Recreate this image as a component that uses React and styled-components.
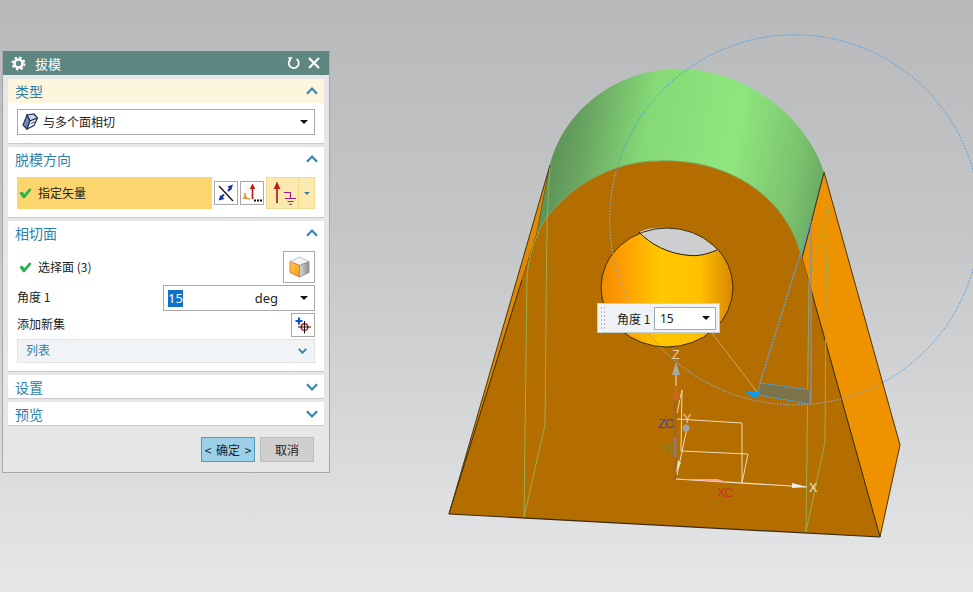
import React from 'react';
import styled, { createGlobalStyle } from 'styled-components';

const GlobalStyle = createGlobalStyle`
  html, body { margin: 0; padding: 0; height: 100%; }
  body { overflow: hidden; font-family: "Noto Sans CJK SC", "Liberation Sans", sans-serif; }
`;

const Viewport = styled.div`
  position: relative;
  width: 973px;
  height: 592px;
  overflow: hidden;
  background: linear-gradient(180deg, #b7b9bb 0%, #c4c6c7 40%, #e6e7e8 100%);
`;

const Scene = styled.svg`
  position: absolute;
  inset: 0;
`;

const Dialog = styled.div`
  position: absolute;
  left: 2px;
  top: 51px;
  width: 326px;
  height: 421px;
  background: #e6e6e6;
  border: 1px solid #a5a8a8;
  border-top: none;
  display: flex;
  flex-direction: column;
`;

const TitleBar = styled.div`
  height: 24px;
  background: #5d8780;
  color: #fff;
  display: flex;
  align-items: center;
  padding: 0 9px 0 8px;
  font-size: 13px;
`;

const TitleText = styled.span`
  flex: 1;
  margin-left: 9px;
`;

const TitleIcons = styled.div`
  display: flex;
  align-items: center;
  gap: 7px;
`;

const Sections = styled.div`
  padding: 4px 5px 0 5px;
  display: flex;
  flex-direction: column;
  gap: 3px;
`;

const Section = styled.div`
  background: #fff;
  border-bottom: 1px solid #c8c8c8;
  display: flex;
  flex-direction: column;
`;

const SectionHead = styled.div`
  height: ${p => p.$h || 24}px;
  display: flex;
  align-items: center;
  justify-content: space-between;
  padding: 0 6px 0 7px;
  color: #2f80aa;
  font-size: 14px;
  background: ${p => (p.$active ? '#fdf5dc' : '#fff')};
`;

const Body = styled.div`
  padding: 6px 9px 8px 9px;
  display: flex;
  flex-direction: column;
  gap: ${p => p.$gap || 0}px;
`;

const Select = styled.div`
  height: 26px;
  box-sizing: border-box;
  border: 1px solid #a8a8a8;
  display: flex;
  align-items: center;
  padding: 0 6px 0 4px;
  gap: 5px;
  font-size: 12px;
  color: #222;
`;

const Grow = styled.span`
  flex: 1;
  padding-bottom: 2px;
`;

// CJK glyphs sit low in their line box, this lifts a label to the row's centre
const Label = styled.span`
  padding-bottom: ${p => p.$lift || 2}px;
`;

const Caret = styled.span`
  width: 0;
  height: 0;
  border-left: 4px solid transparent;
  border-right: 4px solid transparent;
  border-top: 4px solid #111;
`;

const VectorRow = styled.div`
  display: flex;
  align-items: center;
  gap: 2px;
  height: 32px;
`;

const VectorLabel = styled.div`
  width: 195px;
  height: 32px;
  background: #fdd56e;
  display: flex;
  align-items: center;
  padding-left: 2px;
  box-sizing: border-box;
  gap: 6px;
  font-size: 12px;
  color: #222;
`;

const IconButton = styled.div`
  width: ${p => p.$size || 24}px;
  height: ${p => p.$size || 24}px;
  box-sizing: border-box;
  border: 1px solid #a8a8a8;
  background: #fff;
  display: flex;
  align-items: center;
  justify-content: center;
  flex-shrink: 0;
`;

const SplitButton = styled.div`
  width: 49px;
  height: 32px;
  flex-shrink: 0;
  display: flex;
  background: #fbe9ae;
  border: 1px solid #f3d98e;
  box-sizing: border-box;
`;

const SplitMain = styled.div`
  width: 31px;
  display: flex;
  align-items: center;
  justify-content: center;
  border-right: 1px solid #f3d98e;
`;

const SplitDrop = styled.div`
  flex: 1;
  display: flex;
  align-items: center;
  justify-content: center;
`;

const SmallCaret = styled.span`
  width: 0;
  height: 0;
  border-left: 3px solid transparent;
  border-right: 3px solid transparent;
  border-top: 3px solid #3a7f96;
`;

const Row = styled.div`
  display: flex;
  align-items: center;
  justify-content: space-between;
  height: ${p => p.$h}px;
  font-size: 12px;
  color: #222;
`;

const RowLabel = styled.span`
  display: flex;
  align-items: center;
  gap: 6px;
  padding-left: 2px;
`;

const AngleInput = styled.div`
  width: 152px;
  height: 26px;
  box-sizing: border-box;
  border: 1px solid #a8a8a8;
  display: flex;
  align-items: center;
  padding: 0 6px 0 4px;
  font-family: "Noto Sans", sans-serif;
  font-size: 13px;
`;

const Selected = styled.span`
  background: #0f72c4;
  color: #fff;
  line-height: 17px;
  width: 15px;
  text-align: center;
`;

const Unit = styled.span`
  flex: 1;
  text-align: right;
  padding-right: 22px;
`;

const ListHead = styled.div`
  height: 24px;
  box-sizing: border-box;
  background: #f0f4f6;
  border: 1px solid #dfe3e4;
  display: flex;
  align-items: center;
  justify-content: space-between;
  padding: 0 7px 0 8px;
  color: #2f80aa;
  font-size: 12px;
`;

const Footer = styled.div`
  display: flex;
  justify-content: flex-end;
  gap: 5px;
  padding: 11px 15px 0 0;
`;

const Button = styled.div`
  width: 54px;
  height: 25px;
  box-sizing: border-box;
  display: flex;
  align-items: center;
  justify-content: center;
  font-size: 12px;
  word-spacing: 2px;
  color: #222;
  background: ${p => (p.$primary ? '#9ccfe8' : '#cfcfcf')};
  border: 1px solid ${p => (p.$primary ? '#4f9cc0' : '#bdbdbd')};
`;

const FloatBox = styled.div`
  position: absolute;
  left: 597px;
  top: 303px;
  width: 123px;
  height: 30px;
  box-sizing: border-box;
  background: #eff3f5;
  border: 1px solid #c9cccd;
  display: flex;
  align-items: center;
  font-size: 12px;
  color: #222;
  padding: 0 3px 0 2px;
`;

const Grip = styled.span`
  width: 6px;
  height: 24px;
  background-image: radial-gradient(circle, #b4b8bc 1px, transparent 1.1px);
  background-size: 3px 4px;
`;

const FloatLabel = styled.span`
  margin-left: 11px;
  width: 37px;
  white-space: nowrap;
`;

const FloatInput = styled.div`
  width: 62px;
  height: 23px;
  box-sizing: border-box;
  background: #fff;
  border: 1px solid #a8a8a8;
  display: flex;
  align-items: center;
  justify-content: space-between;
  padding: 0 5px;
  font-family: "Noto Sans", sans-serif;
`;

const AxisLabel = styled.text`
  font-family: "Liberation Sans", sans-serif;
  font-size: 12.5px;
  letter-spacing: -1px;
`;

const Gear = () => (
  <svg width="15" height="15" viewBox="0 0 15 15">
    <circle cx="7.5" cy="7.5" r="4" fill="none" stroke="#fff" strokeWidth="2.6" />
    <circle cx="7.5" cy="7.5" r="6" fill="none" stroke="#fff" strokeWidth="2" strokeDasharray="2.4 2.31" />
  </svg>
);

const Reset = () => (
  <svg width="14" height="14" viewBox="0 0 14 14">
    <path d="M9.6 3 A5 5 0 1 1 3.2 3.6" fill="none" stroke="#fff" strokeWidth="1.8" />
    <path d="M5.5 1 L1 1.5 L3 5.8 Z" fill="#fff" />
  </svg>
);

const Close = () => (
  <svg width="12" height="12" viewBox="0 0 12 12">
    <path d="M1 1 L11 11 M11 1 L1 11" stroke="#fff" strokeWidth="2.2" />
  </svg>
);

const Chevron = ({ down, small }) => (
  <svg width={small ? 9 : 12} height={small ? 6 : 8} viewBox="0 0 12 8">
    <path d={down ? 'M1 1.2 L6 6.4 L11 1.2' : 'M1 6.8 L6 1.6 L11 6.8'} fill="none" stroke="#3587ae" strokeWidth={small ? 2.6 : 2.2} />
  </svg>
);

const Check = () => (
  <svg width="13" height="12" viewBox="0 0 16 14">
    <path d="M0.5 7 L4 5 L6.5 8.5 L13 1 L15.5 3 L7 13.5 L5 13.5 Z" fill="#27b24a" />
  </svg>
);

const DraftIcon = () => (
  <svg width="16" height="18" viewBox="0 0 16 18">
    <path d="M5 2 L12 1 L15.5 5 L8 8 Z" fill="#c9d7ef" stroke="#26324a" strokeWidth="1.2" />
    <path d="M5 2 L8 8 L5 16 L1 12 Z" fill="#6f8ac0" stroke="#26324a" strokeWidth="1.2" />
    <path d="M8 8 L15.5 5 L12 12.5 L5 16 Z" fill="#eef2f8" stroke="#26324a" strokeWidth="1.2" />
    <path d="M9 10.5 L13.5 8.5" stroke="#26324a" strokeWidth="0.8" />
  </svg>
);

const ReverseIcon = () => (
  <svg width="22" height="22" viewBox="0 0 22 22">
    <path d="M4 4 L18 19" stroke="#111" strokeWidth="1.3" />
    <path d="M13 9 L16 5.5 M5.5 16 L9 12.5" stroke="#1c2fa8" strokeWidth="2" />
    <path d="M18 2.5 L12.5 4.5 L16 8.5 Z" fill="#1c2fa8" />
    <path d="M3.5 18.5 L5.5 13 L9.5 17 Z" fill="#1c2fa8" />
  </svg>
);

const InferIcon = () => (
  <svg width="22" height="22" viewBox="0 0 22 22">
    <path d="M11.5 17 L11.5 6" stroke="#b01616" strokeWidth="1.6" />
    <path d="M11.5 1.5 L8.8 7 L14.2 7 Z" fill="#c01818" />
    <path d="M9 17 C5 17 3.5 15 4 11" stroke="#e8902c" strokeWidth="1.6" fill="none" />
    <path d="M1.5 13 L6.5 12.5 L4 17 Z" fill="#e8902c" transform="rotate(180 4 14.7)" />
    <path d="M13 18.5 h2 M16 18.5 h2 M19 18.5 h2" stroke="#111" strokeWidth="1.8" />
  </svg>
);

const VectorIcon = () => (
  <svg width="30" height="30" viewBox="0 0 30 30">
    <path d="M9 25 L9 9" stroke="#a81414" strokeWidth="1.6" />
    <path d="M9 3.5 L5.7 11 L12.3 11 Z" fill="#c01818" />
    <path d="M16 14.5 H22.5 V20.5 M17 20.5 H28 M19.5 23.5 H25.5 M21 26.2 H24" stroke="#a01c8c" strokeWidth="1.1" fill="none" />
  </svg>
);

const CubeIcon = () => (
  <svg width="21" height="22" viewBox="0 0 21 22">
    <defs>
      <linearGradient id="cubeLeft" x1="0" y1="0" x2="1" y2="1">
        <stop offset="0" stopColor="#ffd24a" />
        <stop offset="1" stopColor="#f39a1c" />
      </linearGradient>
      <linearGradient id="cubeRight" x1="0" y1="0" x2="1" y2="0">
        <stop offset="0" stopColor="#d9d9d9" />
        <stop offset="1" stopColor="#8d8d8d" />
      </linearGradient>
    </defs>
    <path d="M1 5.5 L10.5 1 L20 5.5 L10.5 9.5 Z" fill="#f4f4f4" stroke="#b5b5b5" strokeWidth="0.8" />
    <path d="M1 5.5 L10.5 9.5 L10.5 21 L1 16.5 Z" fill="url(#cubeLeft)" stroke="#e0603a" strokeWidth="0.8" />
    <path d="M20 5.5 L10.5 9.5 L10.5 21 L20 16.5 Z" fill="url(#cubeRight)" stroke="#888" strokeWidth="0.8" />
  </svg>
);

const AddSetIcon = () => (
  <svg width="22" height="22" viewBox="0 0 22 22">
    <path d="M7 3.5 V10.5 M3.5 7 H10.5" stroke="#0f55d0" strokeWidth="2.2" />
    <circle cx="12.5" cy="13" r="3.3" fill="none" stroke="#d01818" strokeWidth="1.5" />
    <path d="M12.5 7 V19.5 M6 13 H19" stroke="#111" strokeWidth="1" />
  </svg>
);

const FRONT_ARC = 'C560 190 610 161 658 161 C720 158 785 190 802 258';

const Part = () => (
  <Scene width="973" height="592" viewBox="0 0 973 592">
    <defs>
      <linearGradient id="bandGreen" gradientUnits="userSpaceOnUse" x1="550" y1="140" x2="825" y2="190">
        <stop offset="0" stopColor="#5b9155" />
        <stop offset="0.12" stopColor="#6aa562" />
        <stop offset="0.33" stopColor="#85d976" />
        <stop offset="0.65" stopColor="#8fe67e" />
        <stop offset="0.88" stopColor="#7cc46e" />
        <stop offset="1" stopColor="#6aa862" />
      </linearGradient>
      <linearGradient id="holeOrange" gradientUnits="userSpaceOnUse" x1="601" y1="0" x2="733" y2="0">
        <stop offset="0" stopColor="#f08c00" />
        <stop offset="0.15" stopColor="#ff9c00" />
        <stop offset="0.45" stopColor="#ffc800" />
        <stop offset="0.75" stopColor="#ffc000" />
        <stop offset="1" stopColor="#d98600" />
      </linearGradient>
    </defs>

    {/* side faces */}
    <path d="M824 172 L900 445 L880 537 L811 290 L802 258 Z" fill="#ef9200" stroke="#4a3410" strokeWidth="1" />
    <path d="M550 165 L449 514 L522 280 L537 233 Z" fill="#e08a00" stroke="#4a3410" strokeWidth="1" />
    {/* green band */}
    <path d={`M550 165 C563 112 615 69 678 69 C745 69 805 115 824 172 L802 258 C785 190 720 158 658 161 C610 161 560 190 537 233 Z`} fill="url(#bandGreen)" />
    {/* front face */}
    <path d={`M449 514 L522 280 L537 233 ${FRONT_ARC} L811 290 L880 537 Z`} fill="#b46e00" />
    <path d="M449 514 L880 537" stroke="#3a2a10" strokeWidth="1.2" />
    <path d="M449 514 L522 280 M811 290 L880 537" stroke="#4a3410" strokeWidth="1" fill="none" />
    <path d="M824 172 L802 258" stroke="#3a3a2a" strokeWidth="1" />
    <path d={`M537 233 ${FRONT_ARC}`} stroke="#7aa860" strokeWidth="1" fill="none" />

    {/* hole */}
    <ellipse cx="667" cy="287.5" rx="66" ry="59.5" fill="url(#holeOrange)" />
    <path d="M639 232 C652 226 668 228 680 229 C696 232 708 241 717 250 C705 255 698 256 690 255.5 C668 254 650 244 639 232 Z" fill="#cdcecf" />
    <path d="M639 232 C650 244 668 254 690 255.5 C698 256 705 255 717 250" stroke="#2a1c08" strokeWidth="1" fill="none" />
    <ellipse cx="667" cy="287.5" rx="66" ry="59.5" fill="none" stroke="#3a2a10" strokeWidth="1" />

    {/* pale construction lines */}
    <g stroke="#98ac52" strokeWidth="1" fill="none">
      <path d="M524 517 L527 280 C528 260 532 245 539 232" />
      <path d="M524 517 L545 425 L547 220 L550 168" />
      <path d="M806 532 L809 280" />
      <path d="M806 532 L825 442 L826 290 L828 205" />
      <path d="M828 205 L810 280" strokeDasharray="3 2" />
    </g>

    {/* draft angle circle */}
    <path d="M616 172 A185 185 0 1 1 880 384" fill="none" stroke="#3c98ea" strokeWidth="1" strokeDasharray="1.5 1.5" />
    <path d="M616 172 A185 185 0 0 0 880 384" fill="none" stroke="#96a2ac" strokeWidth="1.3" strokeDasharray="1.5 1.5" />

    {/* angle wedge */}
    <path d="M760 383 L810 390 L810 404 L758 395 Z" fill="#7c7348" stroke="#4e9cc8" strokeWidth="1" />
    <path d="M760 383 L811 220" stroke="#6a9ccc" strokeWidth="1.6" strokeDasharray="2 1" fill="none" />
    <path d="M811 404 L811 225" stroke="#8a8bb0" strokeWidth="1.4" fill="none" />
    <path d="M743 391 L760 392 L756 399 Z" fill="#0f9cf0" />
    <path d="M712 333 L757 392" stroke="#c8a860" strokeWidth="1" />

    {/* csys */}
    <path d="M675 400 V480" stroke="#a5651c" strokeWidth="2.5" />
    <path d="M675 437 V457" stroke="#9a78a8" strokeWidth="3" opacity="0.7" />
    <path d="M676 375 V386" stroke="#e8b98a" strokeWidth="1.5" />
    <g fill="none" stroke="#f2d8b8" strokeWidth="1">
      <path d="M677 419 L742 423 L742 483" />
      <path d="M681 451 L748 454 L742 483" />
      <path d="M682 390 L681 451 M682 390 L677 413" />
      <path d="M687 428 L677 475" />
    </g>
    <path d="M676 479 L807 487" stroke="#f4e8d8" strokeWidth="1.2" />
    <path d="M792 483 L807 487 L792 488 Z" fill="#eee" />
    <path d="M672 375 L676 362 L680 375 Z" fill="#a9a9a9" />
    <path d="M671 400 L676 385 L681 400 Z" fill="#c8661a" />
    <path d="M676 479 L728 482 L717 479 Z" fill="#eda898" />
    <path d="M676 473 L678 460 L681 463 Z" fill="#d8e8b8" />
    <circle cx="686" cy="428" r="3.5" fill="#a2a2a2" />
    <AxisLabel x="672" y="359" fill="#eac9a0">Z</AxisLabel>
    <AxisLabel x="658" y="428" fill="#3b3fc0">ZC</AxisLabel>
    <AxisLabel x="662" y="453" fill="#7a8a2a">YC</AxisLabel>
    <AxisLabel x="717" y="497" fill="#c83020">XC</AxisLabel>
    <AxisLabel x="809" y="492" fill="#f0e8d8">X</AxisLabel>
    <AxisLabel x="683" y="423" fill="#eac9a0">Y</AxisLabel>
  </Scene>
);

const App = () => (
  <Viewport>
    <GlobalStyle />
    <Part />
    <Dialog>
      <TitleBar>
        <Gear />
        <TitleText>拔模</TitleText>
        <TitleIcons>
          <Reset />
          <Close />
        </TitleIcons>
      </TitleBar>
      <Sections>
        <Section>
          <SectionHead $active>
            <span>类型</span>
            <Chevron />
          </SectionHead>
          <Body>
            <Select>
              <DraftIcon />
              <Grow>与多个面相切</Grow>
              <Caret />
            </Select>
          </Body>
        </Section>
        <Section>
          <SectionHead>
            <span>脱模方向</span>
            <Chevron />
          </SectionHead>
          <Body>
            <VectorRow>
              <VectorLabel>
                <Check />
                <Label>指定矢量</Label>
              </VectorLabel>
              <IconButton><ReverseIcon /></IconButton>
              <IconButton><InferIcon /></IconButton>
              <SplitButton>
                <SplitMain><VectorIcon /></SplitMain>
                <SplitDrop><SmallCaret /></SplitDrop>
              </SplitButton>
            </VectorRow>
          </Body>
        </Section>
        <Section>
          <SectionHead>
            <span>相切面</span>
            <Chevron />
          </SectionHead>
          <Body $gap={2}>
            <Row $h={32}>
              <RowLabel>
                <Check />
                <Label>选择面 (3)</Label>
              </RowLabel>
              <IconButton $size={32}><CubeIcon /></IconButton>
            </Row>
            <Row $h={26}>
              <Label $lift={3}>角度 1</Label>
              <AngleInput>
                <Selected>15</Selected>
                <Unit>deg</Unit>
                <Caret />
              </AngleInput>
            </Row>
            <Row $h={24}>
              <Label $lift={3}>添加新集</Label>
              <IconButton><AddSetIcon /></IconButton>
            </Row>
            <ListHead>
              <Label $lift={3}>列表</Label>
              <Chevron down small />
            </ListHead>
          </Body>
        </Section>
        <Section>
          <SectionHead $h={23}>
            <span>设置</span>
            <Chevron down />
          </SectionHead>
        </Section>
        <Section>
          <SectionHead $h={23}>
            <span>预览</span>
            <Chevron down />
          </SectionHead>
        </Section>
      </Sections>
      <Footer>
        <Button $primary>&lt; 确定 &gt;</Button>
        <Button>取消</Button>
      </Footer>
    </Dialog>
    <FloatBox>
      <Grip />
      <FloatLabel>角度 1</FloatLabel>
      <FloatInput>
        15
        <Caret />
      </FloatInput>
    </FloatBox>
  </Viewport>
);

export default App;
